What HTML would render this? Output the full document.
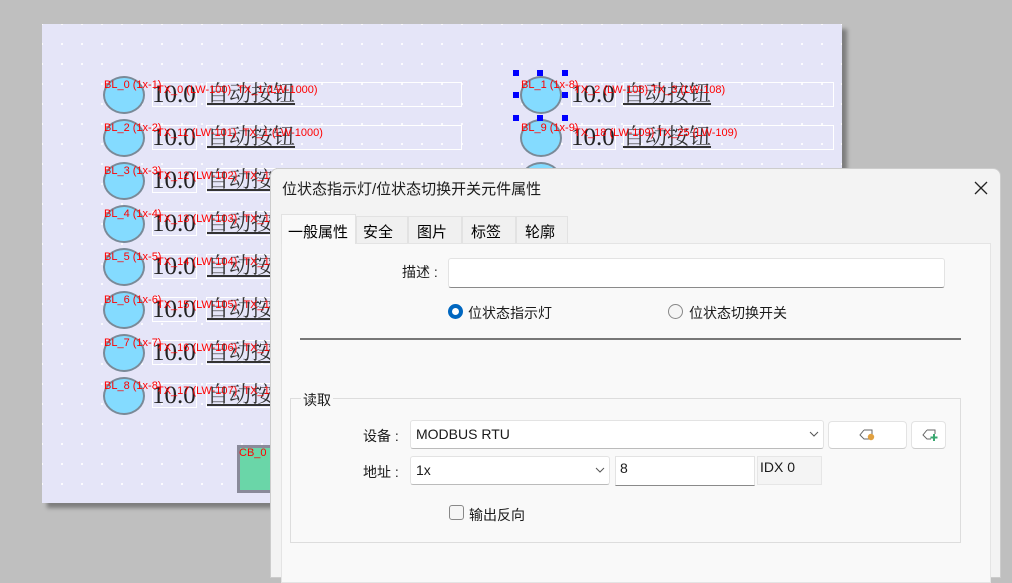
<!DOCTYPE html>
<html><head><meta charset="utf-8"><style>
*{margin:0;padding:0;box-sizing:border-box}
body{width:1012px;height:562px;overflow:hidden;background:#bfbfbf;position:relative;font-family:"Liberation Sans","Noto Sans CJK SC",sans-serif}
.abs{position:absolute}
#canvas{left:42px;top:24px;width:800px;height:479px;background:#e5e5f8;box-shadow:5px 5px 4px rgba(0,0,0,.35);
background-image:radial-gradient(circle,#fff 0.8px,transparent 1.2px);background-size:20px 20px;background-position:10px 10px}
.c{position:absolute;width:42px;height:38px;border-radius:50%;background:#84dbff;border:2px solid #7a8a98}
.lbl{position:absolute;color:#f00;font-size:11px;white-space:nowrap}
.num{position:absolute;font-family:"Liberation Serif",serif;font-size:25px;color:#222;white-space:nowrap;line-height:25px}
.bx{position:absolute;border:1px solid #fff}
.btn{position:absolute;font-family:"Liberation Serif","Noto Serif CJK SC",serif;font-size:22px;line-height:26px;color:#333;text-decoration:underline;white-space:nowrap}
.h{position:absolute;width:6px;height:6px;background:#00f}
#dlg{left:270px;top:168px;width:731px;height:410px;background:#f3f3f3;border-radius:8px 8px 0 0;border:1px solid #ccc}
.t{font-size:14px;color:#1a1a1a;position:absolute;white-space:nowrap}
.tab{position:absolute;top:47px;height:27px;background:#f0f0f0;border:1px solid #e2e2e2;border-bottom:none;font-size:15px;padding:4px 0 0 6px}
.inp{position:absolute;background:#fff;border:1px solid #e3e3e3;border-bottom:1px solid #8a8a8a;border-radius:3px}
</style></head><body>
<div id="canvas" class="abs"></div>
<script>
var ys=[95,138,181,224,267,310,353,396];
var tx=["TX_0 (LW-100)","TX_11 (LW-101)","TX_12 (LW-102)","TX_13 (LW-103)","TX_14 (LW-104)","TX_15 (LW-105)","TX_16 (LW-106)","TX_17 (LW-107)"];
var h="";
var bl=["BL_0 (1x-1)","BL_2 (1x-2)","BL_3 (1x-3)","BL_4 (1x-4)","BL_5 (1x-5)","BL_6 (1x-6)","BL_7 (1x-7)","BL_8 (1x-8)"];
for(var i=0;i<8;i++){var y=ys[i];
h+='<div class="c" style="left:103px;top:'+(y-19)+'px"></div>';
h+='<div class="bx" style="left:152px;top:'+(y-13)+'px;width:45px;height:25px"></div>';
h+='<div class="bx" style="left:206px;top:'+(y-13)+'px;width:256px;height:25px"></div>';
h+='<div class="num" style="left:152px;top:'+(y-13)+'px">10.0</div>';
h+='<div class="btn" style="left:207px;top:'+(y-14)+'px">自动按钮</div>';
h+='<div class="lbl" style="left:104px;top:'+(y-16)+'px">'+bl[i]+'</div>';
h+='<div class="lbl" style="left:157px;top:'+(y-11)+'px">'+tx[i]+'&nbsp;&nbsp;TX_1 (LW-1000)</div>';}
var r=[["BL_1 (1x-8)","TX_2 (LW-108) TX_3 (LW-108)"],["BL_9 (1x-9)","TX_18 (LW-109) TX_25 (LW-109)"]];
for(var j=0;j<3;j++){var y=ys[j];
h+='<div class="c" style="left:520px;top:'+(y-19)+'px"></div>';
if(j<2){
h+='<div class="bx" style="left:571px;top:'+(y-13)+'px;width:45px;height:25px"></div>';
h+='<div class="bx" style="left:623px;top:'+(y-13)+'px;width:211px;height:25px"></div>';
h+='<div class="num" style="left:571px;top:'+(y-13)+'px">10.0</div>';
h+='<div class="btn" style="left:623px;top:'+(y-14)+'px">自动按钮</div>';
h+='<div class="lbl" style="left:521px;top:'+(y-16)+'px">'+r[j][0]+'</div>';
h+='<div class="lbl" style="left:574px;top:'+(y-11)+'px">'+r[j][1]+'</div>';}}
document.write(h);
</script>
<div class="h" style="left:513px;top:70px"></div><div class="h" style="left:537px;top:70px"></div><div class="h" style="left:562px;top:70px"></div>
<div class="h" style="left:513px;top:92px"></div><div class="h" style="left:562px;top:92px"></div>
<div class="h" style="left:513px;top:115px"></div><div class="h" style="left:537px;top:115px"></div><div class="h" style="left:562px;top:115px"></div>
<div class="abs" style="left:237px;top:445px;width:40px;height:48px;background:#6ad6a8;border:3px solid #8a8a9a"></div>
<div class="lbl" style="left:239px;top:447px">CB_0 (</div>

<div id="dlg" class="abs">
 <div class="t" style="left:11px;top:9px;font-size:15px">位状态指示灯/位状态切换开关元件属性</div>
 <svg class="abs" style="left:702px;top:11px" width="16" height="16"><path d="M2 2L14 14M14 2L2 14" stroke="#222" stroke-width="1.3"/></svg>
 <div class="abs" style="left:10px;top:74px;width:710px;height:340px;background:#f9f9f9;border:1px solid #e4e4e4"></div>
 <div class="tab" style="left:10px;top:45px;width:75px;height:30px;background:#f9f9f9;z-index:2;padding-top:6px">一般属性</div>
 <div class="tab" style="left:85px;width:52px">安全</div>
 <div class="tab" style="left:137px;width:54px;padding-left:8px">图片</div>
 <div class="tab" style="left:191px;width:54px;padding-left:8px">标签</div>
 <div class="tab" style="left:245px;width:52px;padding-left:8px">轮廓</div>
 <div class="t" style="left:131px;top:93px">描述 :</div>
 <div class="inp" style="left:177px;top:89px;width:497px;height:30px"></div>
 <div class="abs" style="left:177px;top:135px;width:15px;height:15px;border-radius:50%;border:4px solid #0067c0;background:#fff"></div>
 <div class="t" style="left:197px;top:134px">位状态指示灯</div>
 <div class="abs" style="left:397px;top:135px;width:15px;height:15px;border-radius:50%;border:1px solid #888;background:#f5f5f5"></div>
 <div class="t" style="left:418px;top:134px">位状态切换开关</div>
 <div class="abs" style="left:29px;top:169px;width:661px;height:2px;background:#777"></div>
 <div class="abs" style="left:19px;top:229px;width:671px;height:145px;border:1px solid #ddd"></div>
 <div class="t" style="left:30px;top:221px;background:#f9f9f9;padding:0 2px">读取</div>
 <div class="t" style="left:92px;top:257px">设备 :</div>
 <div class="inp" style="left:139px;top:251px;width:414px;height:29px;border-bottom-color:#bbb"></div>
 <div class="t" style="left:145px;top:257px">MODBUS RTU</div>
 <svg class="abs" style="left:538px;top:262px" width="10" height="6"><path d="M1 1L5 5L9 1" fill="none" stroke="#555"/></svg>
 <div class="inp" style="left:557px;top:252px;width:79px;height:28px;border-bottom-color:#ccc;border-radius:4px"></div>
 <svg class="abs" style="left:587px;top:259px" width="20" height="14"><path d="M6 2H14V7M14 9L12 11H6L2 7L6 2" fill="none" stroke="#666"/><circle cx="13" cy="9" r="3.2" fill="#e0a040"/></svg>
 <div class="inp" style="left:640px;top:252px;width:35px;height:28px;border-bottom-color:#ccc;border-radius:4px"></div>
 <svg class="abs" style="left:650px;top:259px" width="20" height="14"><path d="M6 2H14V6M10 11H6L2 7L6 2" fill="none" stroke="#666"/><path d="M13 6V13M9.5 9.5H16.5" stroke="#3aa870" stroke-width="2"/></svg>
 <div class="t" style="left:92px;top:293px">地址 :</div>
 <div class="inp" style="left:139px;top:287px;width:200px;height:29px;border-bottom-color:#bbb"></div>
 <div class="t" style="left:145px;top:293px">1x</div>
 <svg class="abs" style="left:324px;top:298px" width="10" height="6"><path d="M1 1L5 5L9 1" fill="none" stroke="#555"/></svg>
 <div class="inp" style="left:344px;top:287px;width:140px;height:30px;border-radius:0"></div>
 <div class="t" style="left:349px;top:291px">8</div>
 <div class="abs" style="left:486px;top:287px;width:65px;height:29px;border:1px solid #e6e6e6;background:#f4f4f4"></div>
 <div class="t" style="left:489px;top:290px">IDX 0</div>
 <div class="abs" style="left:178px;top:336px;width:15px;height:15px;border:1px solid #888;border-radius:3px;background:#f5f5f5"></div>
 <div class="t" style="left:198px;top:336px">输出反向</div>
</div>
</body></html>
